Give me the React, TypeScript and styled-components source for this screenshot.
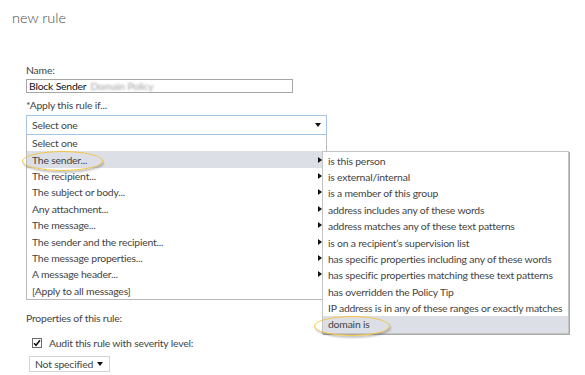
import React from 'react'
import styled, { createGlobalStyle } from 'styled-components'

const GlobalStyle = createGlobalStyle`
	body {
		margin: 0;
		background: #ffffff;
		font-family: Lato, "Liberation Sans", sans-serif;
		color: #444444;
	}
`

const conditions = [
	{ label: 'Select one' },
	{ label: 'The sender...', more: true, open: true },
	{ label: 'The recipient...', more: true },
	{ label: 'The subject or body...', more: true },
	{ label: 'Any attachment...', more: true },
	{ label: 'The message...', more: true },
	{ label: 'The sender and the recipient...', more: true },
	{ label: 'The message properties...', more: true },
	{ label: 'A message header...', more: true },
	{ label: '[Apply to all messages]' },
]

const senderOptions = [
	'is this person',
	'is external/internal',
	'is a member of this group',
	'address includes any of these words',
	'address matches any of these text patterns',
	"is on a recipient\u2019s supervision list",
	'has specific properties including any of these words',
	'has specific properties matching these text patterns',
	'has overridden the Policy Tip',
	'IP address is in any of these ranges or exactly matches',
	'domain is',
]

const Page = styled.div`
	width: 585px;
	height: 375px;
	padding: 8px 0 0 12px;
	box-sizing: border-box;
	overflow: hidden;
`
const Title = styled.h1`
	margin: 0;
	font-size: 14.5px;
	font-weight: 300;
	line-height: 20px;
	color: #4a4a4a;
`
const Form = styled.div`
	display: flex;
	flex-direction: column;
	align-items: flex-start;
	padding-left: 14px;
	margin-top: 35px;
	font-size: 10.4px;
	letter-spacing: -0.2px;
`
const Label = styled.div<{ gap?: number }>`
	line-height: 14px;
	margin-top: ${({ gap }) => (gap || 0) + 'px'};
	color: #444;
`
const TextBox = styled.div`
	margin-top: 2px;
	width: 267px;
	height: 14px;
	box-sizing: border-box;
	border: 1px solid #a6a6a6;
	padding: 0 2px;
	line-height: 12px;
	color: #111;
	white-space: nowrap;
	overflow: hidden;
`
const Blurred = styled.span`
	margin-left: 4px;
	color: #a0a0a0;
	filter: blur(1px);
`
const Picker = styled.div`
	position: relative;
	margin-top: 3px;
	width: 301px;
`
const SelectBox = styled.div`
	display: flex;
	align-items: center;
	justify-content: space-between;
	height: 20px;
	box-sizing: border-box;
	border: 1px solid #a4c5e6;
	padding: 0 5px 0 5px;
	line-height: 18px;
`
const DownArrow = styled.span`
	width: 0;
	height: 0;
	border-left: 3.5px solid transparent;
	border-right: 3.5px solid transparent;
	border-top: 4px solid #111;
`
const List = styled.div`
	border: 1px solid #b9b9b9;
	border-top: none;
`
const Row = styled.div<{ active?: boolean }>`
	position: relative;
	display: flex;
	align-items: center;
	justify-content: space-between;
	height: 16.4px;
	padding: 0 4px 0 5px;
	background: ${({ active }) => (active ? '#dcdfe5' : 'transparent')};
	white-space: nowrap;
`
const RightArrow = styled.span`
	width: 0;
	height: 0;
	border-top: 3.5px solid transparent;
	border-bottom: 3.5px solid transparent;
	border-left: 4px solid #111;
`
const Flyout = styled.div`
	position: absolute;
	top: 0;
	left: calc(100% - 4px);
	z-index: 2;
	width: 245px;
	background: #fff;
	border: 1px solid #c4c4c4;
	box-shadow: 1px 1px 0 #a9a9a9;
`
const FlyRow = styled(Row)`
	padding: 0 0 0 5px;
`
const Circle = styled.span<{ w: number; left: number }>`
	position: absolute;
	top: 0;
	left: ${({ left }) => left + 'px'};
	width: ${({ w }) => w + 'px'};
	height: 20px;
	box-sizing: border-box;
	border: 1.5px solid #f4c542;
	border-radius: 50%;
	box-shadow: 1px 2px 2px rgba(0, 0, 0, 0.22);
	pointer-events: none;
`
const CheckRow = styled.div`
	display: flex;
	align-items: center;
	gap: 7px;
	margin-top: 11px;
	margin-left: 6px;
	line-height: 14px;
	white-space: nowrap;
`
const Check = styled.span`
	display: inline-flex;
	align-items: center;
	justify-content: center;
	width: 10px;
	height: 10px;
	box-sizing: border-box;
	border: 1px solid #6d6d6d;
	background: #fff;
`
const SmallSelect = styled.div`
	display: flex;
	align-items: center;
	justify-content: space-between;
	margin-top: 6px;
	margin-left: 3px;
	width: 81px;
	height: 16px;
	box-sizing: border-box;
	border: 1px solid #d4d4d4;
	padding: 0 6px 0 5px;
	line-height: 14px;
	white-space: nowrap;
`

export default function App() {
	return (
		<Page>
			<GlobalStyle />
			<Title>new rule</Title>
			<Form>
				<Label>Name:</Label>
				<TextBox>
					Block Sender<Blurred>Domain Policy</Blurred>
				</TextBox>
				<Label gap={5}>*Apply this rule if...</Label>
				<Picker>
					<SelectBox>
						Select one
						<DownArrow />
					</SelectBox>
					<List>
						{conditions.map((c) => (
							<Row key={c.label} active={c.open}>
								{c.label}
								{c.more && <RightArrow />}
								{c.open && <Circle w={81} left={-5} />}
								{c.open && (
									<Flyout>
										{senderOptions.map((o, i) => (
											<FlyRow key={o} active={i === senderOptions.length - 1}>
												{o}
												{i === senderOptions.length - 1 && <Circle w={76} left={-9} />}
											</FlyRow>
										))}
									</Flyout>
								)}
							</Row>
						))}
					</List>
				</Picker>
				<Label gap={11}>Properties of this rule:</Label>
				<CheckRow>
					<Check>
						<svg width="8" height="8" viewBox="0 0 8 8">
							<path d="M1 4.2 L3 6.3 L7 1.2" fill="none" stroke="#111" strokeWidth="1.5" />
						</svg>
					</Check>
					Audit this rule with severity level:
				</CheckRow>
				<SmallSelect>
					Not specified
					<DownArrow />
				</SmallSelect>
			</Form>
		</Page>
	)
}
